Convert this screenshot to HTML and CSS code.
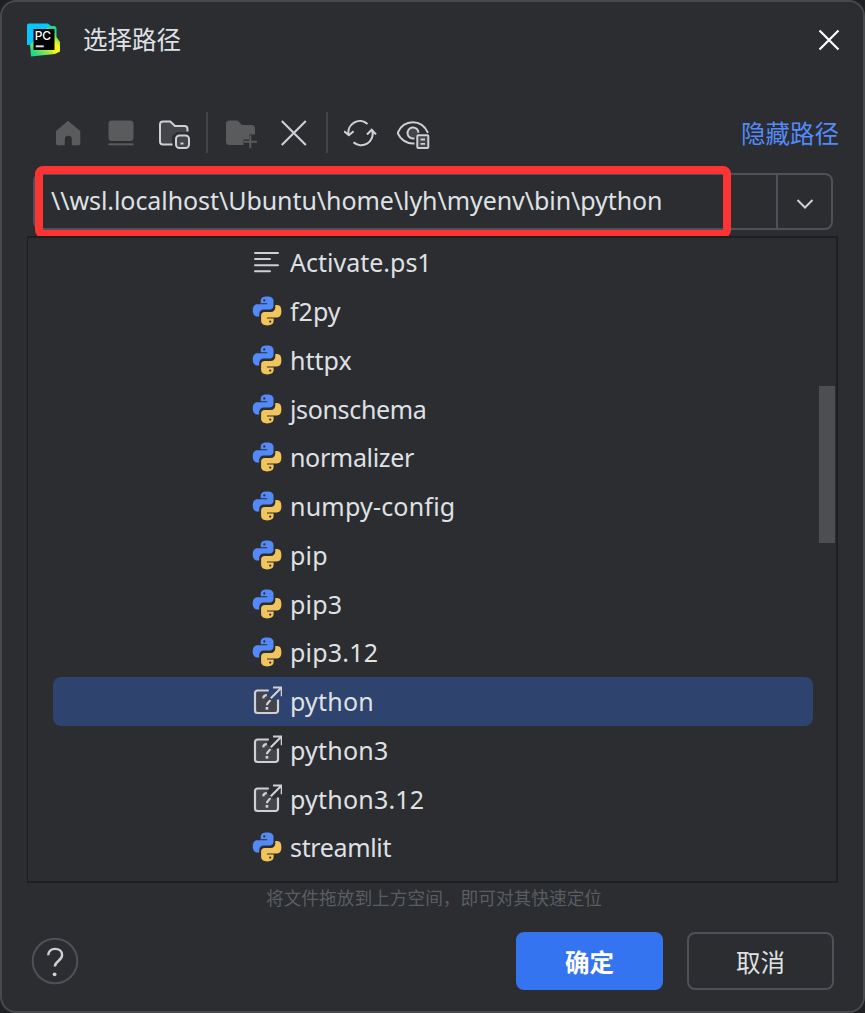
FILE: index.html
```
<!DOCTYPE html>
<html lang="zh-CN">
<head>
  <meta charset="UTF-8">
  <meta name="viewport" content="width=device-width, initial-scale=1.0">
  <title>选择路径</title>
  <link rel="stylesheet" href="styles.css">
</head>
<body>
  <svg class="sprite">
    <defs>
      <linearGradient id="green" gradientUnits="userSpaceOnUse" x1="8" y1="31" x2="27" y2="6">
        <stop offset="0" stop-color="#21d789"/>
        <stop offset="0.35" stop-color="#b5ec35"/>
        <stop offset="0.45" stop-color="#fcf21c"/>
        <stop offset="0.65" stop-color="#fcf21c"/>
        <stop offset="0.95" stop-color="#21d789"/>
      </linearGradient>
    </defs>
    <symbol id="python" viewBox="0 0 30 30">
      <path fill="#548af7" d="M15 .6c-4 0-6.300 1.500-6.300 4.300v2.300h6.500v1.100H5.200C2.300 8.300.7 10.700.7 14.200s1.500 6.200 4.200 6.200h2.300v-2.600c0-2.500 2-4.400 4.500-4.400h6.500c1.900 0 3.300-1.400 3.300-3.300V4.900C21.500 2.100 19 .6 15 .6z"/>
      <path fill="#f2c55c" d="M23.300 9v2.600c0 2.500-2 4.500-4.500 4.500h-6.300c-1.900 0-3.400 1.400-3.400 3.300v5.400c0 2.900 2.500 4.600 6.200 4.600s6.300-1.500 6.300-4.400v-2.600H15v-1h10c2.700 0 4.400-2.100 4.400-6.200S28 9 25.300 9z"/>
      <circle cx="12.300" cy="4.400" r="1.100" fill="#2b2d30"/>
      <circle cx="18.200" cy="25.600" r="1.100" fill="#2b2d30"/>
    </symbol>
    <symbol id="text" viewBox="0 0 30 30">
      <path d="M3 6h23M3 12.100h15M3 18.200h23M3 24.300h15" fill="none" stroke="#ced0d6" stroke-width="2" stroke-linecap="round"/>
    </symbol>
    <symbol id="link" viewBox="0 0 30 30">
      <path d="M17 4.500H5.500A2.500 2.500 0 0 0 3 7v17.500A2.500 2.500 0 0 0 5.500 27h18a2.500 2.500 0 0 0 2.500-2.500V13l-4 2-7-6z" fill="#43454a"/>
      <path d="M16.800 4.500H5.500A2.500 2.500 0 0 0 3 7v17.500A2.500 2.500 0 0 0 5.500 27h18a2.500 2.500 0 0 0 2.500-2.500V13.500M18.800 12.200L29.300 1.700M21 1.500h8.800v8.800" fill="none" stroke="#ced0d6" stroke-width="2.200"/>
      <path d="M11.200 12.300c.2-2 1.600-3.200 3.700-3.200M18.200 14c-.6 2.200-3.300 2.300-3.300 5.200" fill="none" stroke="#ced0d6" stroke-width="2.200"/>
      <rect x="13.600" y="21" width="2.700" height="2.700" fill="#ced0d6"/>
    </symbol>
  </svg>

  <div class="dialog">
    <div class="titlebar">
      <svg class="logo" viewBox="0 0 34 34">
        <path d="M2 .5h19l5 4-15 17L0 22V2.500A2 2 0 0 1 2 .5z" fill="#08c5fb"/>
        <path d="M22 3h6l1.500 2v9l3.500 5v9.500L28 31 4 33.500 3 22z" fill="url(#green)"/>
        <rect x="6.500" y="6" width="21" height="21" fill="#000"/>
        <text x="7.800" y="16.500" class="logo-text">PC</text>
        <rect x="8.700" y="22.300" width="8" height="2" fill="#ddd"/>
      </svg>
      <span class="title">选择路径</span>
      <svg class="close" viewBox="0 0 22 22"><path d="M1.500 1.500l19 19M20.500 1.500l-19 19" stroke="#fff" stroke-width="2.200"/></svg>
    </div>

    <div class="toolbar">
      <svg viewBox="0 0 34 34"><path d="M17 4.800L29.300 15v12.300a2 2 0 0 1-2 2h-6.500v-6a3.500 3.500 0 0 0-7 0v6H7a2 2 0 0 1-2-2V15z" fill="#5a5b5c"/></svg>
      <svg viewBox="0 0 34 34"><rect x="4.500" y="4.500" width="25" height="20.500" rx="3.500" fill="#5a5b5c"/><path d="M4.500 28.300h25" stroke="#5a5b5c" stroke-width="2"/></svg>
      <svg viewBox="0 0 34 34">
        <path d="M15 28.500H6.500a3 3 0 0 1-3-3v-17a3 3 0 0 1 3-3h6.800l4.700 4.500h9a3 3 0 0 1 3 3v3H20l-5 4z" fill="#43454a"/>
        <path d="M15.500 28.500H6a3 3 0 0 1-3-3v-17a3 3 0 0 1 3-3h7.300l4.700 4.500h9.500a3 3 0 0 1 3 3v2.500" fill="none" stroke="#ced0d6" stroke-width="2"/>
        <rect x="19" y="19.500" width="13" height="12.500" rx="3.500" fill="#43454a" stroke="#ced0d6" stroke-width="2"/>
        <rect x="23.500" y="26.500" width="3" height="2" fill="#ced0d6"/>
      </svg>
      <span class="sep"></span>
      <svg viewBox="0 0 34 34"><path d="M5 4.500h8.500L18 9h9.500a3.500 3.500 0 0 1 3.500 3.500v6h-6v5h-5.500V29H5.500A3.500 3.500 0 0 1 2 25.500V8a3.500 3.500 0 0 1 3-3.500z" fill="#5a5b5c"/><path d="M20 25.700h13M26.300 19.200v13" stroke="#5a5b5c" stroke-width="2"/></svg>
      <svg viewBox="0 0 34 34"><path d="M4.800 5l24 24M28.800 5l-24 24" stroke="#ced0d6" stroke-width="2.100"/></svg>
      <span class="sep"></span>
      <svg viewBox="0 0 34 34" fill="none" stroke="#ced0d6" stroke-width="2.100"><path d="M23.500 8A11.400 11.400 0 0 0 4.700 19M.2 15.200l4.700 4 4.700-4M9.500 26.200A11.400 11.400 0 0 0 28.300 15M23 18.400l4.700-4.600 4.300 4.600"/></svg>
      <svg viewBox="0 0 34 34">
        <path d="M17.500 27.500C9 28.200 3 22.800.6 17 3.500 10.300 9 6.300 15.700 6.300c6.800 0 12.300 4 15.300 10.500" fill="none" stroke="#ced0d6" stroke-width="2"/>
        <path d="M17.500 22.300a5.500 5.500 0 1 1 4-5.500" fill="#43454a" stroke="#ced0d6" stroke-width="2"/>
        <rect x="20.300" y="19.300" width="11" height="12.700" rx="1" fill="#43454a" stroke="#ced0d6" stroke-width="2"/>
        <path d="M23.500 23.500H28M23.500 27.800H28" stroke="#ced0d6" stroke-width="1.800"/>
      </svg>
      <a class="hide-path">隐藏路径</a>
    </div>

    <div class="path-row">
      <div class="path-input"><span>\\wsl.localhost\Ubuntu\home\lyh\myenv\bin\python</span></div>
      <div class="path-drop"><svg viewBox="0 0 18 12"><path d="M1.500 2L9 9.500 16.500 2" fill="none" stroke="#ced0d6" stroke-width="2"/></svg></div>
      <div class="highlight"></div>
    </div>

    <div class="tree">
      <div class="item"><svg><use href="#text"/></svg>Activate.ps1</div>
      <div class="item"><svg><use href="#python"/></svg>f2py</div>
      <div class="item"><svg><use href="#python"/></svg>httpx</div>
      <div class="item tight"><svg><use href="#python"/></svg>jsonschema</div>
      <div class="item tight"><svg><use href="#python"/></svg>normalizer</div>
      <div class="item wide"><svg><use href="#python"/></svg>numpy-config</div>
      <div class="item wide"><svg><use href="#python"/></svg>pip</div>
      <div class="item wide"><svg><use href="#python"/></svg>pip3</div>
      <div class="item wide"><svg><use href="#python"/></svg>pip3.12</div>
      <div class="item wide selected"><svg><use href="#link"/></svg>python</div>
      <div class="item wide"><svg><use href="#link"/></svg>python3</div>
      <div class="item wide"><svg><use href="#link"/></svg>python3.12</div>
      <div class="item tight"><svg><use href="#python"/></svg>streamlit</div>
      <div class="scrollbar"></div>
    </div>
    <div class="hint">将文件拖放到上方空间，即可对其快速定位</div>

    <div class="footer">
      <svg class="help" viewBox="0 0 48 48">
        <circle cx="24" cy="24" r="22.300" fill="none" stroke="#4e5157" stroke-width="2"/>
        <path d="M17.200 18.200c0-4 3-6.300 6.900-6.300s7 2.300 7 6.200c0 5.600-7.300 6.200-7.300 11.500" fill="none" stroke="#ced0d6" stroke-width="2.400"/>
        <circle cx="23.600" cy="37.300" r="1.900" fill="#ced0d6"/>
      </svg>
      <button class="btn primary">确定</button>
      <button class="btn">取消</button>
    </div>
  </div>
</body>
</html>
```
FILE: styles.css
```
* {
  box-sizing: border-box;
}
body {
  margin: 0;
  background: #1f2022;
  color: #dfe1e5;
  font-family: "Noto Sans", "Noto Sans CJK SC", sans-serif;
  font-size: 25px;
}
svg {
  flex: none;
}
.sprite {
  position: absolute;
  width: 0;
  height: 0;
}
.dialog {
  display: flex;
  flex-direction: column;
  height: 1013px;
  padding: 0 25px;
  background: #2b2d30;
  border: 2px solid #47494c;
  border-radius: 16px;
}

/* title */
.titlebar {
  display: flex;
  align-items: center;
  height: 76px;
}
.logo {
  width: 34px;
  height: 34px;
}
.logo-text {
  font: 500 12px Inter, sans-serif;
  letter-spacing: -0.3px;
  fill: #fff;
}
.title {
  flex: 1;
  margin: -3px 0 0 22px;
  font-family: "Noto Sans CJK SC", sans-serif;
  font-size: 24.5px;
}
.close {
  width: 22px;
  height: 22px;
  margin-right: -2px;
}

/* toolbar */
.toolbar {
  display: flex;
  align-items: center;
  gap: 19px;
  height: 56px;
  margin-top: 26px;
  padding-left: 24px;
}
.toolbar svg {
  width: 34px;
  height: 34px;
  margin-top: 2px;
}
.sep {
  width: 2px;
  height: 41px;
  margin: 0 -3px 0 -4px;
  background: #43454a;
}
.hide-path {
  margin: 1px -1px 0 auto;
  color: #548af7;
  font-family: "Noto Sans CJK SC", sans-serif;
  font-size: 24.5px;
}

/* path field */
.path-row {
  position: relative;
  display: flex;
  height: 57px;
  margin: 13px 5px 0 6px;
  border: 2px solid #4e5157;
  border-radius: 8px;
}
.path-input {
  flex: 1;
  display: flex;
  align-items: center;
  padding: 0 0 4px 16px;
  letter-spacing: -0.07px;
  white-space: nowrap;
}
.path-drop {
  display: flex;
  align-items: center;
  justify-content: center;
  width: 55px;
  border-left: 2px solid #4e5157;
}
.path-drop svg {
  width: 18px;
  height: 12px;
  margin-top: 5px;
}
.highlight {
  position: absolute;
  left: 0;
  top: -9px;
  width: 696px;
  height: 72px;
  border: 8px solid #fc3434;
  border-radius: 8px;
}

/* file tree */
.tree {
  position: relative;
  height: 647px;
  margin-top: 6px;
  padding: 0 23px 0 25px;
  border: 2px solid #1e1f22;
  border-left-width: 1px;
}
.item {
  display: flex;
  align-items: center;
  height: 48.75px;
  padding-left: 199px;
  border-radius: 8px;
}
.item svg {
  width: 30px;
  height: 30px;
  margin-right: 8px;
}
.tight {
  letter-spacing: -0.35px;
}
.wide {
  letter-spacing: 0.2px;
}
.selected {
  background: #2e436e;
}
.scrollbar {
  position: absolute;
  right: 1px;
  top: 148px;
  width: 16px;
  height: 157px;
  background: #4d4e51;
}
.hint {
  height: 30px;
  padding-left: 3px;
  line-height: 28px;
  text-align: center;
  color: #5a5d63;
  font-family: "Noto Sans CJK SC", sans-serif;
  font-size: 17.7px;
}

/* buttons */
.footer {
  display: flex;
  gap: 24px;
  margin-top: 19px;
  padding: 0 4px;
}
.help {
  width: 48px;
  height: 48px;
  margin: 5px auto 0 0;
}
.btn {
  width: 147px;
  height: 58px;
  padding: 0;
  background: none;
  border: 2px solid #4e5157;
  border-radius: 8px;
  color: #dfe1e5;
  font-family: "Noto Sans CJK SC", sans-serif;
  font-size: 24.5px;
}
.primary {
  background: #3574f0;
  border-color: #3574f0;
  color: #fff;
  font-weight: bold;
}
```
